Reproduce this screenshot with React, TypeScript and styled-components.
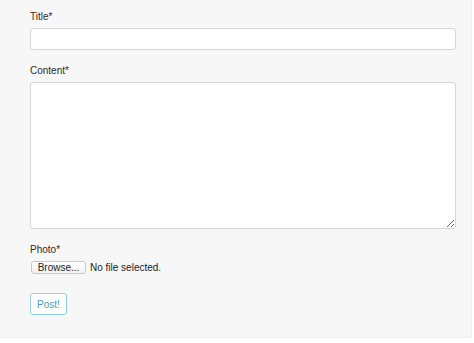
import styled, { createGlobalStyle } from "styled-components";

const GlobalStyle = createGlobalStyle`
  html, body {
    margin: 0;
    padding: 0;
    background: #ffffff;
  }
  body {
    font-family: "Liberation Sans", Arial, sans-serif;
    color: #333333;
  }
`;

// STYLED COMPONENTS ----------------------------------->

const Panel = styled.form`
  width: 472px;
  height: 338px;
  box-sizing: border-box;
  background: #f7f7f7;
  border-right: 1px solid #efefef;
  border-bottom: 1px solid #efefef;
  padding: 10px 16px 0 30px;
  display: flex;
  flex-direction: column;
`;

const FieldGroup = styled.div`
  display: flex;
  flex-direction: column;
  margin-bottom: 14px;
`;

const Label = styled.label`
  font-size: 10px;
  line-height: 14px;
  height: 14px;
  margin-bottom: 4px;
  color: #2b2b2b;
`;

const TextInput = styled.input`
  width: 426px;
  height: 22px;
  box-sizing: border-box;
  border: 1px solid #d6d6d6;
  border-radius: 3px;
  background: #ffffff;
  margin: 0;
  padding: 0 6px;
`;

const TextArea = styled.textarea`
  width: 426px;
  height: 147px;
  box-sizing: border-box;
  border: 1px solid #d6d6d6;
  border-radius: 3px;
  background: #ffffff;
  margin: 0;
  padding: 4px 6px;
  resize: vertical;
`;

const FileRow = styled.div`
  display: flex;
  align-items: center;
  gap: 4px;
  height: 13px;
  margin-left: 1px;
`;

const BrowseButton = styled.span`
  display: inline-flex;
  align-items: center;
  justify-content: center;
  width: 55px;
  height: 13px;
  box-sizing: border-box;
  border: 1px solid #c9c9c9;
  border-radius: 3px;
  background: linear-gradient(#ffffff, #f1f1f1);
  font-size: 10px;
  color: #222222;
`;

const FileName = styled.span`
  font-size: 10px;
  color: #222222;
`;

const PostButton = styled.button`
  width: 37px;
  height: 22px;
  margin-top: 5px;
  box-sizing: border-box;
  border: 1px solid #93d1dd;
  border-radius: 3px;
  background: #ffffff;
  color: #4a9db4;
  font-family: "Liberation Sans", Arial, sans-serif;
  font-size: 10px;
  padding: 0;
  cursor: pointer;
`;

// FUNCTIONAL COMPONENT ----------------------------------->

const App = () => {
  return (
    <>
      <GlobalStyle />
      <Panel onSubmit={(e) => e.preventDefault()}>
        <FieldGroup>
          <Label>Title*</Label>
          <TextInput type="text" />
        </FieldGroup>
        <FieldGroup>
          <Label>Content*</Label>
          <TextArea />
        </FieldGroup>
        <FieldGroup>
          <Label>Photo*</Label>
          <FileRow>
            <BrowseButton>Browse...</BrowseButton>
            <FileName>No file selected.</FileName>
          </FileRow>
        </FieldGroup>
        <div>
          <PostButton type="submit">Post!</PostButton>
        </div>
      </Panel>
    </>
  );
};

export default App;
